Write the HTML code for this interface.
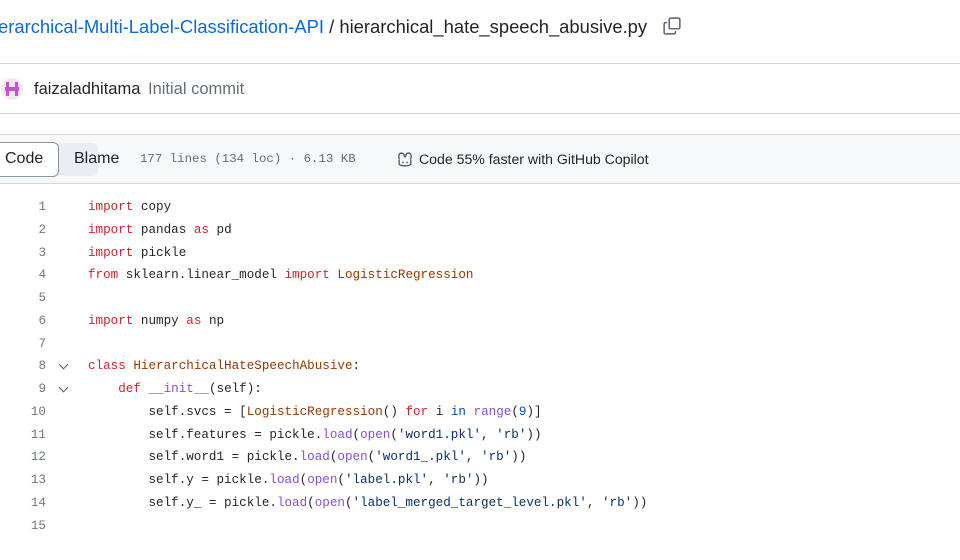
<!DOCTYPE html><html><head><style>
body{margin:0;width:960px;height:540px;overflow:hidden;background:#fff;font-family:"Liberation Sans",sans-serif;color:#1f2328;position:relative}
.a{position:absolute}
.hr{position:absolute;left:0;width:960px;height:1px;background:#d0d7de}
.code{position:absolute;left:0;top:196px;font-family:"Liberation Mono",monospace;font-size:12.6px;line-height:22.77px;white-space:pre}
.ln{position:absolute;left:0;width:46px;text-align:right;color:#6e7781}
.tx{position:absolute;left:88px}
.k{color:#cf222e}.c{color:#953800}.f{color:#8250df}.s{color:#0a3069}.n{color:#0550ae}
.chev{position:absolute;left:60px;width:6px;height:6px;border-right:1.5px solid #57606a;border-bottom:1.5px solid #57606a;transform:rotate(45deg)}
</style></head><body>
<div class="a" style="left:-2px;top:16px;font-size:18.4px;white-space:nowrap"><span style="color:#0969da">erarchical-Multi-Label-Classification-API</span> / hierarchical_hate_speech_abusive.py</div>
<svg class="a" style="left:663px;top:17px" width="18" height="18" viewBox="0 0 16 16" fill="none" stroke="#57606a" stroke-width="1.3"><rect x="5.5" y="1" width="9.5" height="9.5" rx="1.2"/><path d="M3.5 5H2.2A1.2 1.2 0 0 0 1 6.2v7.6A1.2 1.2 0 0 0 2.2 15h7.6a1.2 1.2 0 0 0 1.2-1.2V12.5"/></svg>
<div class="hr" style="top:63px"></div>
<div class="a" style="left:1px;top:78px;width:22px;height:22px;border-radius:50%;background:#f3e6f5"></div>
<svg class="a" style="left:1px;top:78px" width="22" height="22" viewBox="0 0 22 22" fill="#c552c9"><rect x="4" y="9" width="14" height="4"/><rect x="5" y="4" width="3" height="14"/><rect x="14" y="4" width="3" height="14"/></svg>
<div class="a" style="left:34px;top:80px;font-size:16.5px"><span>faizaladhitama</span> <span style="color:#656d76;margin-left:3px">Initial commit</span></div>
<div class="hr" style="top:113px"></div>
<div class="a" style="left:0;top:134px;width:960px;height:50px;background:#f6f8fa;border-top:1px solid #d0d7de;border-bottom:1px solid #d0d7de;box-sizing:border-box"></div>
<div class="a" style="left:55px;top:143px;width:43px;height:33px;background:#eaeef2;border-radius:0 6px 6px 0"></div>
<div class="a" style="left:-8px;top:142px;width:65px;height:33px;background:#fff;border:1px solid #8c959f;border-radius:6px"></div>
<div class="a" style="left:5px;top:150px;font-size:16px">Code</div>
<div class="a" style="left:74px;top:150px;font-size:16px">Blame</div>
<div class="a" style="left:140px;top:152px;font-family:'Liberation Mono',monospace;font-size:12.4px;color:#656d76;white-space:pre">177 lines (134 loc) · 6.13 KB</div>
<svg class="a" style="left:396px;top:151px" width="18" height="17" viewBox="0 0 16 16" fill="none" stroke="#57606a" stroke-width="1.3"><path d="M3 7.5C1.5 6 2 2 4.5 2S7.5 4 7.5 6M13 7.5C14.5 6 14 2 11.5 2S8.5 4 8.5 6M2.5 8v4.5c2 2 9 2 11 0V8"/><path d="M6 10v1.5M10 10v1.5"/></svg>
<div class="a" style="left:419px;top:151px;font-size:14.1px">Code 55% faster with GitHub Copilot</div>
<div class="code">
<div class="ln" style="top:0">1</div><div class="tx" style="top:0"><span class="k">import</span> copy</div>
<div class="ln" style="top:22.77px">2</div><div class="tx" style="top:22.77px"><span class="k">import</span> pandas <span class="k">as</span> pd</div>
<div class="ln" style="top:45.54px">3</div><div class="tx" style="top:45.54px"><span class="k">import</span> pickle</div>
<div class="ln" style="top:68.31px">4</div><div class="tx" style="top:68.31px"><span class="k">from</span> sklearn.linear_model <span class="k">import</span> <span class="c">LogisticRegression</span></div>
<div class="ln" style="top:91.08px">5</div>
<div class="ln" style="top:113.85px">6</div><div class="tx" style="top:113.85px"><span class="k">import</span> numpy <span class="k">as</span> np</div>
<div class="ln" style="top:136.62px">7</div>
<div class="ln" style="top:159.39px">8</div><div class="chev" style="top:165px"></div><div class="tx" style="top:159.39px"><span class="k">class</span> <span class="c">HierarchicalHateSpeechAbusive</span>:</div>
<div class="ln" style="top:182.16px">9</div><div class="chev" style="top:188px"></div><div class="tx" style="top:182.16px">    <span class="k">def</span> <span class="f">__init__</span>(self):</div>
<div class="ln" style="top:204.93px">10</div><div class="tx" style="top:204.93px">        self.svcs = [<span class="c">LogisticRegression</span>() <span class="k">for</span> i <span class="n">in</span> <span class="f">range</span>(<span class="n">9</span>)]</div>
<div class="ln" style="top:227.7px">11</div><div class="tx" style="top:227.7px">        self.features = pickle.<span class="f">load</span>(<span class="f">open</span>(<span class="s">'word1.pkl'</span>, <span class="s">'rb'</span>))</div>
<div class="ln" style="top:250.47px">12</div><div class="tx" style="top:250.47px">        self.word1 = pickle.<span class="f">load</span>(<span class="f">open</span>(<span class="s">'word1_.pkl'</span>, <span class="s">'rb'</span>))</div>
<div class="ln" style="top:273.24px">13</div><div class="tx" style="top:273.24px">        self.y = pickle.<span class="f">load</span>(<span class="f">open</span>(<span class="s">'label.pkl'</span>, <span class="s">'rb'</span>))</div>
<div class="ln" style="top:296.01px">14</div><div class="tx" style="top:296.01px">        self.y_ = pickle.<span class="f">load</span>(<span class="f">open</span>(<span class="s">'label_merged_target_level.pkl'</span>, <span class="s">'rb'</span>))</div>
<div class="ln" style="top:318.78px">15</div>
</div>
</body></html>
